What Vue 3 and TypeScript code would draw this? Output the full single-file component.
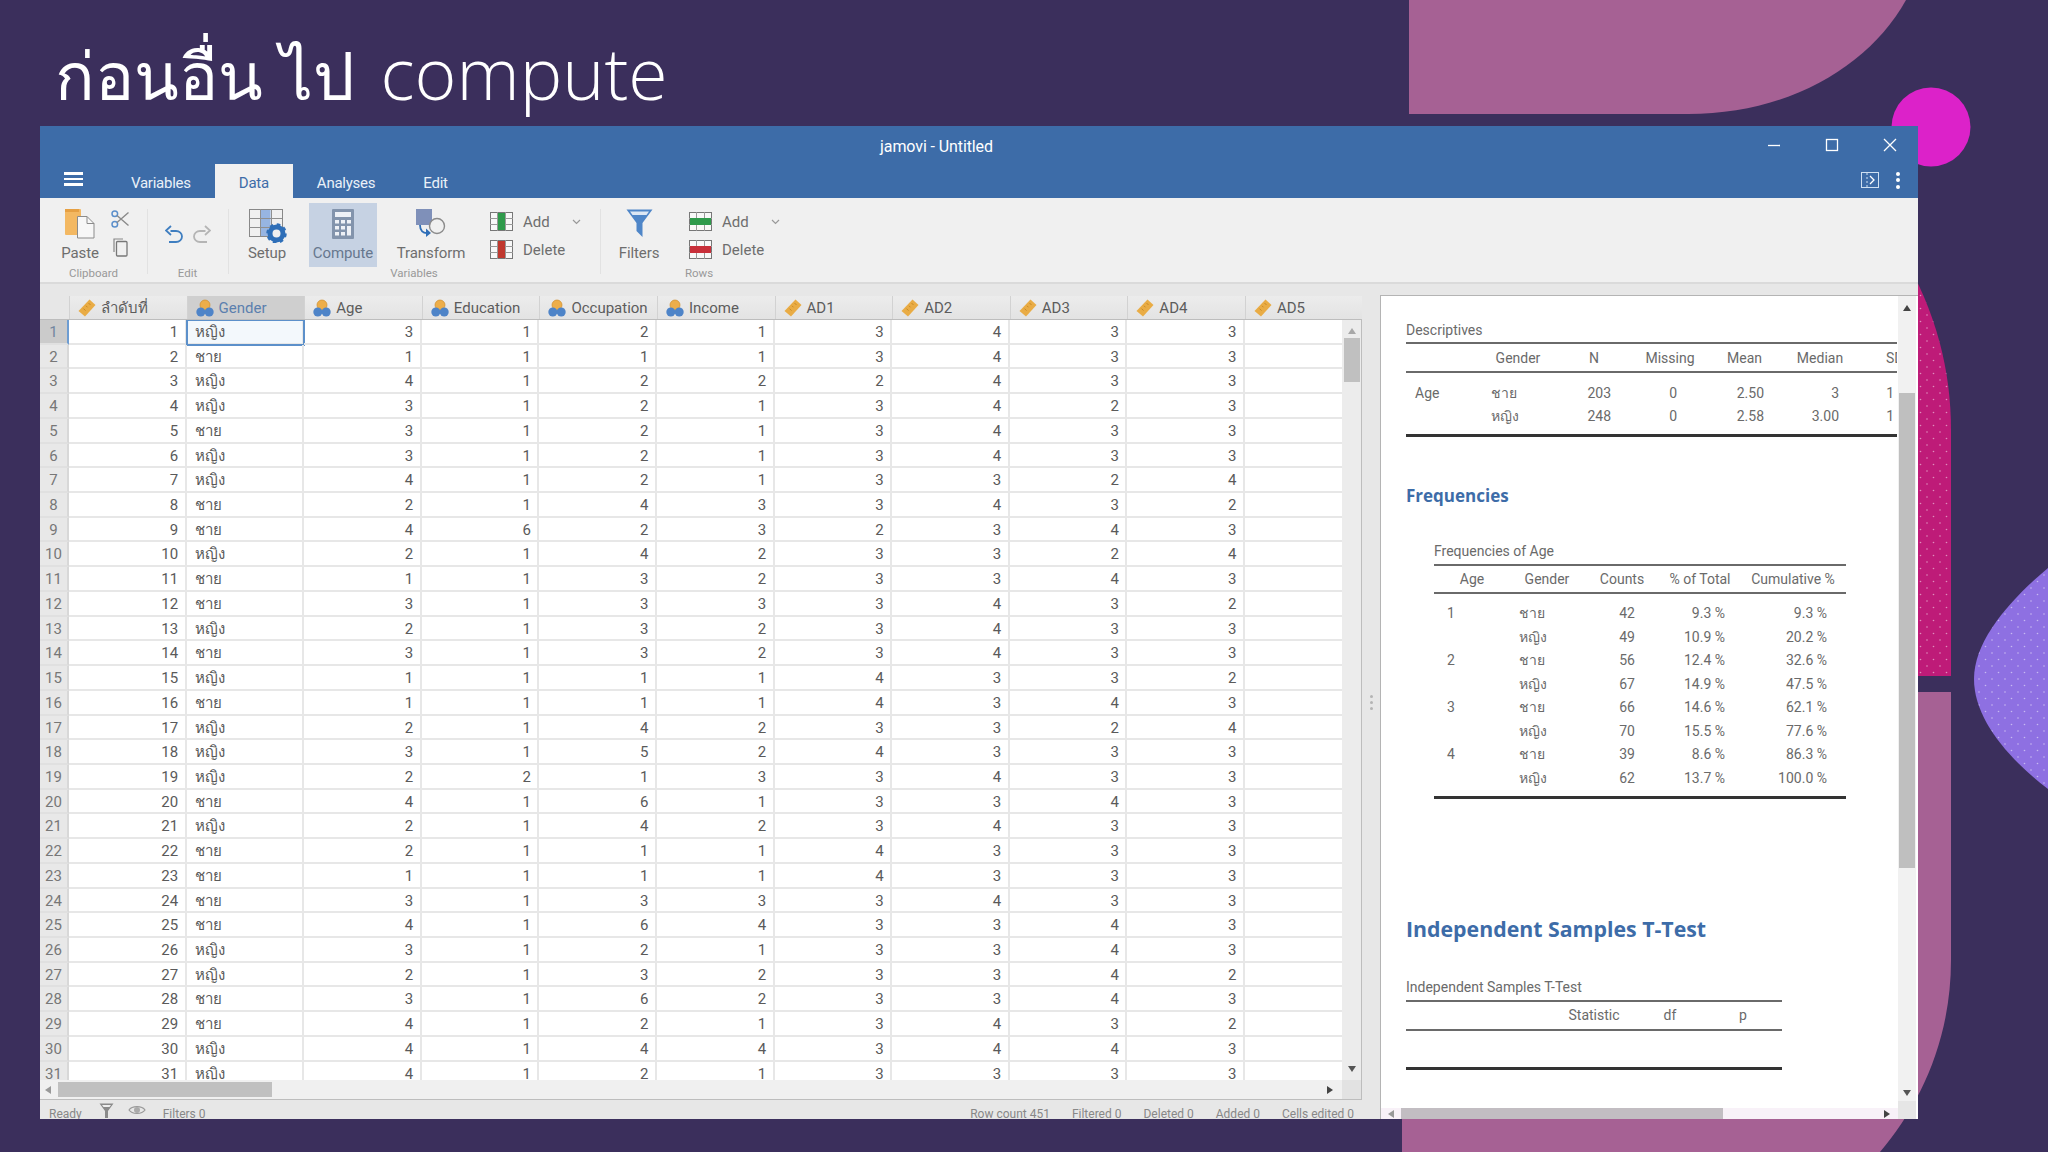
<script setup lang="ts">
const raw: string[] = [
  'f31213433','m11113433','f41222433','f31213423','m31213433','f31213433','f41213324','m21433432',
  'm46232343','f21423324','m11323343','m31333432','f21323433','m31323433','f11114332','m11114343',
  'f21423324','f31524333','f22133433','m41613343','f21423433','m21114333','m11114333','m31333433',
  'm41643343','f31213343','f21323342','m31623343','m41213432','f41443443','f41213333',
]
const male = 'ชาย'
const female = 'หญิง'
const rows = raw.map((r, i) => ({
  n: i + 1,
  g: r[0] === 'f' ? female : male,
  v: r.slice(1).split(''),
}))
const cols = [
  { name: 'ลำดับที่', icon: 'ruler' },
  { name: 'Gender', icon: 'nom', on: true },
  { name: 'Age', icon: 'nom' },
  { name: 'Education', icon: 'nom' },
  { name: 'Occupation', icon: 'nom' },
  { name: 'Income', icon: 'nom' },
  { name: 'AD1', icon: 'ruler' },
  { name: 'AD2', icon: 'ruler' },
  { name: 'AD3', icon: 'ruler' },
  { name: 'AD4', icon: 'ruler' },
  { name: 'AD5', icon: 'ruler' },
]
const freq = [
  ['1', male, '42', '9.3 %', '9.3 %'],
  ['', female, '49', '10.9 %', '20.2 %'],
  ['2', male, '56', '12.4 %', '32.6 %'],
  ['', female, '67', '14.9 %', '47.5 %'],
  ['3', male, '66', '14.6 %', '62.1 %'],
  ['', female, '70', '15.5 %', '77.6 %'],
  ['4', male, '39', '8.6 %', '86.3 %'],
  ['', female, '62', '13.7 %', '100.0 %'],
]
const desc = [
  ['Age', male, '203', '0', '2.50', '3', '1'],
  ['', female, '248', '0', '2.58', '3.00', '1'],
]
</script>

<template>
  <div class="slide" lang="th">
    <svg class="decor" width="2048" height="1152" viewBox="0 0 2048 1152">
      <defs>
        <pattern id="dots" width="13" height="13" patternUnits="userSpaceOnUse">
          <circle cx="3" cy="3" r="0.8" fill="#ffffff" opacity="0.5" />
          <circle cx="9.500" cy="9.500" r="0.8" fill="#ffffff" opacity="0.5" />
        </pattern>
      </defs>
      <path d="M1409 0V114H1688C1790 114 1870 65 1906 0Z" fill="#A66194" />
      <circle cx="1931" cy="127" r="39.500" fill="#DC22C9" />
      <path d="M1900 250C1936 310 1951 370 1951 430V676H1900Z" fill="#BE1B78" />
      <path d="M1900 250C1936 310 1951 370 1951 430V676H1900Z" fill="url(#dots)" />
      <path d="M1402 1152V1100H1900V692H1951V960C1951 1040 1920 1105 1880 1152Z" fill="#A66194" />
      <path d="M2048 568C2010 600 1974 640 1974 679C1974 720 2010 760 2048 789Z" fill="#8E70E2" />
      <path d="M2048 568C2010 600 1974 640 1974 679C1974 720 2010 760 2048 789Z" fill="url(#dots)" />
    </svg>

    <svg class="sprites" width="0" height="0">
      <symbol id="ruler" viewBox="0 0 18 18">
        <path d="M11.500 0.500L17.500 6L7 17.500L0.500 12Z" fill="#E9AC45" />
        <path d="M10.500 4l2 2M8 6.800l1.500 1.500M5.500 9.600l2 2" stroke="#C98A25" stroke-width="1" />
      </symbol>
      <symbol id="nom" viewBox="0 0 18 18">
        <circle cx="9" cy="6" r="5" fill="#EDAE4A" stroke="#D08E2C" stroke-width="0.7" />
        <circle cx="4.800" cy="13" r="4.500" fill="#4E84C8" />
        <circle cx="13.200" cy="13" r="4.500" fill="#4E84C8" />
      </symbol>
      <symbol id="colgrid" viewBox="0 0 23 19">
        <rect x="0.500" y="0.500" width="22" height="18" fill="#f8f8f8" stroke="#777" />
        <path d="M0 6.500H23M0 12.500H23M7.500 0V19M15.500 0V19" stroke="#999" />
      </symbol>
    </svg>

    <h1 class="title"><span class="t-th">ก่อนอื่น ไป</span><span class="t-en"> compute</span></h1>

    <div class="window">
      <header class="head">
        <div class="titlebar">
          <span class="win-title">jamovi - Untitled</span>
          <div class="win-ctrl">
            <span class="ctrl">
              <svg width="14" height="14" viewBox="0 0 14 14"><path d="M1 7.500H13" stroke="#fff" stroke-width="1.300" /></svg>
            </span>
            <span class="ctrl">
              <svg width="14" height="14" viewBox="0 0 14 14"><rect x="1.500" y="1.500" width="11" height="11" fill="none" stroke="#fff" stroke-width="1.300" /></svg>
            </span>
            <span class="ctrl">
              <svg width="14" height="14" viewBox="0 0 14 14"><path d="M1 1L13 13M13 1L1 13" stroke="#fff" stroke-width="1.300" /></svg>
            </span>
          </div>
        </div>
        <div class="tabbar">
          <span class="burger"><i></i><i></i><i></i></span>
          <nav class="tabs">
            <a class="tab">Variables</a>
            <a class="tab active">Data</a>
            <a class="tab">Analyses</a>
            <a class="tab">Edit</a>
          </nav>
          <svg class="panel-ic" width="18" height="16" viewBox="0 0 18 16">
            <rect x="0.500" y="0.500" width="17" height="15" fill="none" stroke="#cfe0f2" />
            <path d="M6 1V15" stroke="#cfe0f2" stroke-dasharray="2 2" />
            <path d="M9 4L13 8L9 12" fill="none" stroke="#fff" stroke-width="1.300" />
          </svg>
          <span class="kebab"><i></i><i></i><i></i></span>
        </div>
      </header>

      <section class="toolbar">
        <div class="group g-clip">
          <div class="g-body">
            <div class="btn paste">
              <svg width="30" height="30" viewBox="0 0 30 30">
                <rect x="0" y="0" width="16" height="26" rx="1" fill="#F3B862" />
                <rect x="0" y="0" width="14" height="3" fill="#E6A043" />
                <path d="M12.500 7.500H22L29 14.500V29H12.500Z" fill="#f7f7f7" stroke="#8b8b8b" />
                <path d="M22 7.500V14.500H29" fill="none" stroke="#8b8b8b" />
              </svg>
              <span class="lbl">Paste</span>
            </div>
            <div class="mini">
              <svg width="18" height="18" viewBox="0 0 18 18">
                <circle cx="3.800" cy="3.800" r="2.800" fill="none" stroke="#5B8FCB" stroke-width="1.500" />
                <circle cx="3.800" cy="14.200" r="2.800" fill="none" stroke="#5B8FCB" stroke-width="1.500" />
                <path d="M6 5.500L17.500 15.500M6 12.500L17.500 2.500" stroke="#8a8a8a" stroke-width="1.400" />
              </svg>
              <svg width="15" height="19" viewBox="0 0 15 19">
                <path d="M1 14V1H10" fill="none" stroke="#888" stroke-width="1.200" />
                <rect x="3.500" y="3.500" width="10.500" height="14.500" rx="1" fill="none" stroke="#777" stroke-width="1.300" />
              </svg>
            </div>
          </div>
          <span class="g-lbl">Clipboard</span>
        </div>

        <div class="group g-edit">
          <div class="g-body">
            <svg width="18" height="18" viewBox="0 0 18 18">
              <path d="M5.500 6H11C14.500 6 17 8.500 17 11.500C17 14.500 14.500 17 11 17H4" fill="none" stroke="#3F7EC0" stroke-width="1.800" />
              <path d="M6 1L1 5.500L6 10" fill="none" stroke="#3F7EC0" stroke-width="1.800" />
            </svg>
            <svg width="18" height="18" viewBox="0 0 18 18">
              <path d="M12.500 6H7C3.500 6 1 8.500 1 11.500C1 14.500 3.500 17 7 17H14" fill="none" stroke="#b5b5b5" stroke-width="1.800" />
              <path d="M12 1L17 5.500L12 10" fill="none" stroke="#b5b5b5" stroke-width="1.800" />
            </svg>
          </div>
          <span class="g-lbl">Edit</span>
        </div>

        <div class="group g-vars">
          <div class="g-body">
            <div class="btn setup">
              <svg width="38" height="34" viewBox="0 0 38 34">
                <rect x="11.500" y="1" width="10" height="26" fill="#97B5E2" />
                <rect x="0.500" y="0.500" width="33" height="27" fill="none" stroke="#888" />
                <path d="M0 9.500H33M0 18.500H33M11.500 0V27M22.500 0V27" stroke="#8f8f8f" />
                <circle cx="27.500" cy="24.500" r="6.500" fill="#F0F0F0" stroke="#2F6FB8" stroke-width="5" />
                <circle cx="27.500" cy="24.500" r="9" fill="none" stroke="#2F6FB8" stroke-width="2.500" stroke-dasharray="3.500 3.570" />
              </svg>
              <span class="lbl">Setup</span>
            </div>
            <div class="btn compute">
              <svg width="22" height="30" viewBox="0 0 22 30">
                <rect x="0" y="0" width="22" height="30" rx="1" fill="#8394AC" />
                <rect x="3" y="3" width="16" height="5" fill="#eef1f6" />
                <rect x="3" y="11" width="4" height="3.500" fill="#eef1f6" /><rect x="9" y="11" width="4" height="3.500" fill="#eef1f6" /><rect x="15" y="11" width="4" height="3.500" fill="#eef1f6" />
                <rect x="3" y="17" width="4" height="3.500" fill="#eef1f6" /><rect x="9" y="17" width="4" height="3.500" fill="#eef1f6" /><rect x="15" y="17" width="4" height="9.500" fill="#eef1f6" />
                <rect x="3" y="23" width="4" height="3.500" fill="#eef1f6" /><rect x="9" y="23" width="4" height="3.500" fill="#eef1f6" />
              </svg>
              <span class="lbl">Compute</span>
            </div>
            <div class="btn transform">
              <svg width="30" height="28" viewBox="0 0 30 28">
                <rect x="0" y="0" width="16" height="16" fill="#7F90B9" />
                <circle cx="21" cy="17" r="7.500" fill="#f0f0f0" stroke="#8b8b8b" stroke-width="1.400" />
                <path d="M4 16C4 22 7 24.500 12 24" fill="none" stroke="#2F6FB8" stroke-width="1.800" />
                <path d="M10 19.500L15 24L10 28Z" fill="#2F6FB8" />
              </svg>
              <span class="lbl">Transform</span>
            </div>
            <div class="stack">
              <div class="st-row">
                <svg class="gridic" width="23" height="19" viewBox="0 0 23 19">
                  <use href="#colgrid" />
                  <rect x="8" y="1" width="7" height="17" fill="#2F9A4B" />
                </svg>
                <span class="lbl-s">Add</span>
                <svg class="chev" width="9" height="6" viewBox="0 0 9 6"><path d="M1 1L4.500 4.500L8 1" fill="none" stroke="#999" stroke-width="1.200" /></svg>
              </div>
              <div class="st-row">
                <svg class="gridic" width="23" height="19" viewBox="0 0 23 19">
                  <use href="#colgrid" />
                  <rect x="8" y="1" width="7" height="17" fill="#C0392F" />
                </svg>
                <span class="lbl-s">Delete</span>
              </div>
            </div>
          </div>
          <span class="g-lbl">Variables</span>
        </div>

        <div class="group g-rows">
          <div class="g-body">
            <div class="btn filters">
              <svg width="27" height="28" viewBox="0 0 27 28">
                <path d="M0.500 0.500H26.500L16.500 14V28L10.500 22V14Z" fill="#4F86C8" />
                <path d="M4 2.500H23L20.500 6H6.500Z" fill="#DCE7F4" />
              </svg>
              <span class="lbl">Filters</span>
            </div>
            <div class="stack">
              <div class="st-row">
                <svg class="gridic" width="23" height="19" viewBox="0 0 23 19">
                  <use href="#colgrid" />
                  <rect x="1" y="6" width="21" height="7" fill="#2F9A4B" />
                </svg>
                <span class="lbl-s">Add</span>
                <svg class="chev" width="9" height="6" viewBox="0 0 9 6"><path d="M1 1L4.500 4.500L8 1" fill="none" stroke="#999" stroke-width="1.200" /></svg>
              </div>
              <div class="st-row">
                <svg class="gridic" width="23" height="19" viewBox="0 0 23 19">
                  <use href="#colgrid" />
                  <rect x="1" y="6" width="21" height="7" fill="#C8303A" />
                </svg>
                <span class="lbl-s">Delete</span>
              </div>
            </div>
          </div>
          <span class="g-lbl">Rows</span>
        </div>
      </section>

      <main class="main">
        <div class="left">
          <div class="ghead">
            <div class="corner"></div>
            <div v-for="c in cols" :key="c.name" class="hcell" :class="{ on: c.on }">
              <svg width="18" height="18"><use :href="'#' + c.icon" /></svg>
              <span>{{ c.name }}</span>
            </div>
          </div>
          <div class="garea">
            <div class="gbody">
              <div v-for="r in rows" :key="r.n" class="grow">
                <div class="num" :class="{ cur: r.n === 1 }">{{ r.n }}</div>
                <div class="cell">{{ r.n }}</div>
                <div class="cell txt" :class="{ sel: r.n === 1 }">{{ r.g }}</div>
                <div v-for="(v, i) in r.v" :key="i" class="cell">{{ v }}</div>
                <div class="cell"></div>
              </div>
            </div>
            <div class="vscroll">
              <i class="arr up"></i>
              <div class="vthumb"></div>
              <div class="flexfill"></div>
              <i class="arr dn"></i>
              <div class="vgap"></div>
            </div>
          </div>
          <div class="hscroll">
            <i class="arr lf"></i>
            <div class="hthumb"></div>
            <div class="flexfill"></div>
            <i class="arr rt"></i>
            <div class="hcorner"></div>
          </div>
          <footer class="status">
            <span>Ready</span>
            <svg class="st-fun" width="15" height="15" viewBox="0 0 15 15">
              <path d="M0.500 0.500H14.500L9 8V15H6V8Z" fill="#8a8a8a" />
              <path d="M3 2H12L10.500 4H4.500Z" fill="#eee" />
            </svg>
            <svg class="st-eye" width="18" height="12" viewBox="0 0 18 12">
              <path d="M1 6C4 1.500 14 1.500 17 6C14 10.500 4 10.500 1 6Z" fill="none" stroke="#999" stroke-width="1.200" />
              <circle cx="9" cy="6" r="3" fill="#aaa" />
            </svg>
            <span class="st-fil">Filters 0</span>
            <span class="flexfill"></span>
            <span>Row count 451</span>
            <span>Filtered 0</span>
            <span>Deleted 0</span>
            <span>Added 0</span>
            <span>Cells edited 0</span>
          </footer>
        </div>

        <div class="splitter"><i></i><i></i><i></i></div>

        <div class="results">
          <div class="r-col">
            <div class="r-content">
              <div class="r-title first">Descriptives</div>
              <div class="tbl desc">
                <div class="thead">
                  <span></span><span>Gender</span><span>N</span><span>Missing</span><span>Mean</span><span>Median</span><span>SD</span>
                </div>
                <div class="tbody">
                  <div v-for="(d, i) in desc" :key="i" class="trow">
                    <span v-for="(x, j) in d" :key="j">{{ x }}</span>
                  </div>
                </div>
              </div>

              <h2 class="h-freq">Frequencies</h2>
              <div class="indent">
                <div class="r-title">Frequencies of Age</div>
                <div class="tbl freq">
                  <div class="thead">
                    <span>Age</span><span>Gender</span><span>Counts</span><span>% of Total</span><span>Cumulative %</span>
                  </div>
                  <div class="tbody">
                    <div v-for="(f, i) in freq" :key="i" class="trow">
                      <span v-for="(x, j) in f" :key="j">{{ x }}</span>
                    </div>
                  </div>
                </div>
              </div>

              <h2 class="h-ttest">Independent Samples T-Test</h2>
              <div class="r-title tt">Independent Samples T-Test</div>
              <div class="tbl ttest">
                <div class="thead">
                  <span></span><span>Statistic</span><span>df</span><span>p</span>
                </div>
                <div class="tbody"></div>
              </div>
            </div>
            <div class="r-hscroll">
              <i class="arr lf"></i>
              <div class="r-hthumb"></div>
              <div class="flexfill"></div>
              <i class="arr rt"></i>
            </div>
          </div>
          <div class="r-vscroll">
            <i class="arr up"></i>
            <div class="r-vthumb"></div>
            <div class="flexfill"></div>
            <i class="arr dn"></i>
            <div class="r-corner"></div>
          </div>
        </div>
      </main>
    </div>
  </div>
</template>

<style>
html, body { margin: 0; padding: 0; background: #3B2F5C; }
</style>

<style scoped>
.slide {
  position: relative;
  width: 2048px;
  height: 1152px;
  overflow: hidden;
  background: #3B2F5C;
  font-family: Roboto, "Noto Sans", sans-serif;
  color: #666;
}
.decor { position: absolute; left: 0; top: 0; }
.sprites { position: absolute; }
.title {
  position: relative;
  margin: 0;
  height: 126px;
  box-sizing: border-box;
  padding-left: 55px;
  padding-top: 26px;
  font-family: "Open Sans", "Noto Sans", sans-serif;
  font-weight: 300;
  font-size: 71.500px;
  line-height: 94px;
  color: #fff;
  white-space: nowrap;
}
.t-th { font-size: 65.500px; }
.t-en { margin-left: 7px; }
.window {
  position: relative;
  margin-left: 40px;
  width: 1878px;
  height: 993px;
  display: flex;
  flex-direction: column;
  background: #E7E7E7;
  overflow: hidden;
}
.head { background: #3D6CA8; color: #fff; flex: none; }
.titlebar {
  position: relative;
  height: 38px;
  display: flex;
  align-items: center;
  justify-content: center;
}
.win-title { font-size: 16px; margin-left: -85px; margin-top: 3px; letter-spacing: -0.1px; }
.win-ctrl { position: absolute; right: -1px; top: 0; display: flex; }
.ctrl { width: 58px; height: 38px; display: flex; align-items: center; justify-content: center; }
.tabbar { height: 34px; display: flex; align-items: stretch; padding-left: 24px; padding-right: 18px; }
.burger { width: 19px; display: flex; flex-direction: column; justify-content: center; gap: 3px; margin-right: 24px; margin-top: -4px; }
.burger i { display: block; height: 2.500px; background: #fff; }
.tabs { display: flex; flex: 1; }
.tab { padding: 0 24px; font-size: 15px; line-height: 38px; letter-spacing: -0.25px; height: 34px; color: #eaf1f8; }
.tab.active { background: #F0F0F0; color: #3D6CA8; }
.panel-ic { align-self: center; margin-right: 17px; margin-top: -2px; }
.kebab { display: flex; flex-direction: column; justify-content: center; gap: 2.500px; margin-top: -2px; }
.kebab i { display: block; width: 4px; height: 4px; border-radius: 50%; background: #fff; }

.toolbar {
  flex: none;
  height: 86px;
  box-sizing: border-box;
  background: #F0F0F0;
  border-bottom: 2px solid #DADADA;
  display: flex;
  padding-top: 5px;
  color: #6e6e6e;
}
.group { display: flex; flex-direction: column; position: relative; box-sizing: border-box; }
.group + .group::before {
  content: "";
  position: absolute;
  left: 0;
  top: 6px;
  bottom: 8px;
  width: 1px;
  background: #E2E2E2;
}
.g-body { height: 64px; display: flex; flex: none; }
.g-lbl { text-align: center; font-size: 11.500px; line-height: 12px; margin-top: 0; color: #999; }
.g-clip { width: 107px; }
.g-clip .g-body { padding-left: 16px; }
.g-edit { width: 81px; }
.g-edit .g-body { padding-left: 18px; padding-top: 22px; gap: 10px; box-sizing: border-box; }
.g-vars { width: 372px; }
.g-rows { width: 198px; }
.btn { display: flex; flex-direction: column; align-items: center; box-sizing: border-box; padding-top: 6px; height: 64px; }
.lbl { font-size: 15px; line-height: 18px; margin-top: auto; margin-bottom: 5px; letter-spacing: -0.1px; white-space: nowrap; }
.paste { width: 48px; }
.mini { display: flex; flex-direction: column; align-items: center; margin-left: 7px; padding-top: 7px; gap: 10px; width: 18px; }
.setup { width: 78px; margin-right: 3px; }
.setup svg { margin-left: 1px; }
.compute { width: 68px; background: #C6D2E3; margin-right: 15px; color: #66778E; }
.transform { width: 78px; margin-right: 20px; }
.stack { display: flex; flex-direction: column; gap: 9px; padding-top: 9px; }
.st-row { display: flex; align-items: center; height: 19px; }
.lbl-s { font-size: 15px; margin-left: 10px; }
.chev { margin-left: 22px; }
.filters { width: 78px; margin-left: 0; margin-right: 11px; }

.main { flex: 1; display: flex; min-height: 0; padding-top: 12px; }
.left { width: 1322px; display: flex; flex-direction: column; flex: none; }
.ghead { height: 23px; display: flex; overflow: hidden; flex: none; }
.corner { width: 29px; flex: none; }
.hcell {
  width: 117.600px;
  flex: none;
  box-sizing: border-box;
  display: flex;
  align-items: center;
  gap: 5px;
  padding-left: 8px;
  font-size: 15px;
  color: #5c5c5c;
  background: linear-gradient(#ECECEC, #E3E3E3);
  border-left: 1px solid #D2D2D2;
  white-space: nowrap;
}
.hcell.on { background: #CFCFCF; color: #5B7FAE; }
.garea { flex: 1; min-height: 0; display: flex; border-top: 1px solid #BDBDBD; }
.gbody { flex: 1; overflow: hidden; background: #fff; }
.grow { display: flex; height: 24.720px; }
.num {
  width: 29px;
  flex: none;
  text-align: center;
  background: #E8E8E8;
  border-right: 2px solid #D8D8D8;
  box-sizing: border-box;
  line-height: 24px;
  font-size: 15px;
  color: #777;
  border-bottom: 2px solid #E0E0E0;
}
.num.cur { background: #CBCBCB; border-right-color: #6E9DD2; color: #7286A0; }
.cell {
  width: 117.600px;
  flex: none;
  box-sizing: border-box;
  padding-right: 6.500px;
  text-align: right;
  line-height: 24px;
  font-size: 15px;
  color: #5a5a5a;
  border-right: 2px solid #E7E7E7;
  border-bottom: 2px solid #E7E7E7;
}
.cell.txt { text-align: left; padding-left: 8px; padding-right: 0; }
.cell.sel { outline: 2px solid #5C90CA; outline-offset: -1px; background: #F3F8FC; }

.vscroll { width: 20px; flex: none; display: flex; flex-direction: column; align-items: center; background: #ECECEC; border-right: 1px solid #BDBDBD; box-sizing: border-box; }
.arr { width: 0; height: 0; display: block; flex: none; }
.arr.up { border-left: 4px solid transparent; border-right: 4px solid transparent; border-bottom: 6px solid #A8A8A8; margin-top: 8px; }
.arr.dn { border-left: 4px solid transparent; border-right: 4px solid transparent; border-top: 6px solid #555; }
.arr.lf { border-top: 4px solid transparent; border-bottom: 4px solid transparent; border-right: 6px solid #999; }
.arr.rt { border-top: 4px solid transparent; border-bottom: 4px solid transparent; border-left: 6px solid #444; }
.vthumb { width: 16px; height: 44px; background: #C0C0C0; margin-top: 4px; }
.vgap { height: 8px; flex: none; }
.flexfill { flex: 1; }
.hscroll {
  height: 20px;
  flex: none;
  display: flex;
  align-items: center;
  background: #F0F0F0;
  border-bottom: 1px solid #BDBDBD;
  border-right: 1px solid #BDBDBD;
  box-sizing: border-box;
  padding-left: 5px;
}
.hthumb { width: 214px; height: 15px; background: #C0C0C0; margin-left: 7px; }
.hcorner { width: 19px; height: 19px; background: #E2E2E2; margin-left: 9px; flex: none; }
.status {
  flex: none;
  height: 19px;
  display: flex;
  align-items: center;
  gap: 22px;
  padding: 9px 8px 0 9px;
  box-sizing: border-box;
  font-size: 12px;
  color: #888;
  white-space: nowrap;
}
.st-fun { margin-left: -5px; margin-right: -8px; margin-top: -8px; }
.st-eye { margin-right: -5px; margin-top: -8px; }

.splitter { width: 18px; flex: none; display: flex; flex-direction: column; align-items: center; justify-content: center; gap: 3px; margin-top: -10px; }
.splitter i { display: block; width: 3px; height: 3px; border-radius: 50%; background: #B4B4B4; }

.results {
  flex: 1;
  min-width: 0;
  display: flex;
  background: #fff;
  border-left: 1px solid #B4B4B4;
  border-top: 1px solid #B4B4B4;
  box-sizing: border-box;
  margin-top: -1px;
}
.r-col { width: 517px; flex: none; display: flex; flex-direction: column; min-height: 0; }
.r-content { flex: 1; min-height: 0; overflow: hidden; padding-left: 25px; font-size: 14px; color: #6a6a6a; }
.r-title { height: 22px; line-height: 22px; white-space: nowrap; }
.r-title.first { margin-top: 23px; }
.tbl { box-sizing: border-box; }
.thead, .trow { display: grid; overflow: hidden; }
.thead { box-sizing: border-box; border-top: 2px solid #6A6A6A; border-bottom: 2px solid #6A6A6A; text-align: center; }
.trow > *, .thead > * { white-space: nowrap; }
.tbody { border-bottom: 3px solid #333; }
.trow { height: 23px; line-height: 23px; }

.desc { width: 491px; margin-top: 1px; }
.desc .thead, .desc .trow { grid-template-columns: 78px 68px 84px 68px 81px 70px 42px; }
.desc .thead { height: 31px; line-height: 28px; }
.desc .thead > :last-child { text-align: left; padding-left: 31px; }
.desc .tbody { padding: 9px 0 6px; }
.desc .trow > :nth-child(1) { padding-left: 9px; }
.desc .trow > :nth-child(2) { padding-left: 7px; }
.desc .trow > :nth-child(3) { text-align: right; padding-right: 25px; }
.desc .trow > :nth-child(4) { text-align: right; padding-right: 27px; }
.desc .trow > :nth-child(5) { text-align: right; padding-right: 21px; }
.desc .trow > :nth-child(6) { text-align: right; padding-right: 16px; }
.desc .trow > :nth-child(7) { text-align: right; padding-right: 3px; }

h2 { margin: 0; color: #3D6CA8; font-weight: 700; font-family: "Open Sans", "Noto Sans", sans-serif; white-space: nowrap; }
.h-freq { font-size: 17px; height: 26px; line-height: 26px; margin-top: 46px; }
.indent { margin-left: 28px; margin-top: 31px; }
.freq { width: 412px; margin-top: 2px; }
.freq .thead, .freq .trow { grid-template-columns: 76px 74px 76px 80px 106px; }
.freq .thead { height: 30px; line-height: 26px; }
.freq .tbody { padding: 8px 0 6px; }
.freq .trow { height: 23.500px; line-height: 23.500px; }
.freq .trow > :nth-child(1) { padding-left: 13px; }
.freq .trow > :nth-child(2) { padding-left: 9px; }
.freq .trow > :nth-child(3) { text-align: right; padding-right: 25px; }
.freq .trow > :nth-child(4) { text-align: right; padding-right: 15px; }
.freq .trow > :nth-child(5) { text-align: right; padding-right: 19px; }
.h-ttest { font-size: 21.300px; height: 34px; line-height: 34px; margin-top: 113px; }
.r-title.tt { margin-top: 30px; }
.ttest { width: 376px; margin-top: 2px; }
.ttest .thead { grid-template-columns: 146px 84px 68px 78px; height: 31px; line-height: 27px; }
.ttest .tbody { height: 39px; box-sizing: border-box; }

.r-hscroll { height: 11px; flex: none; display: flex; align-items: center; background: #F8F1F8; padding-left: 7px; padding-right: 8px; overflow: hidden; }
.r-hthumb { width: 322px; height: 11px; background: #C2BDC2; margin-left: 7px; }
.r-vscroll { width: 18px; flex: none; display: flex; flex-direction: column; align-items: center; background: #F1F1F1; }
.r-vscroll .arr.up { margin-top: 9px; border-bottom-color: #444; }
.r-vthumb { width: 16px; height: 475px; background: #BFBFBF; margin-top: 82px; }
.r-corner { height: 18px; flex: none; width: 100%; background: #E6E6E6; margin-top: 5px; }
</style>
